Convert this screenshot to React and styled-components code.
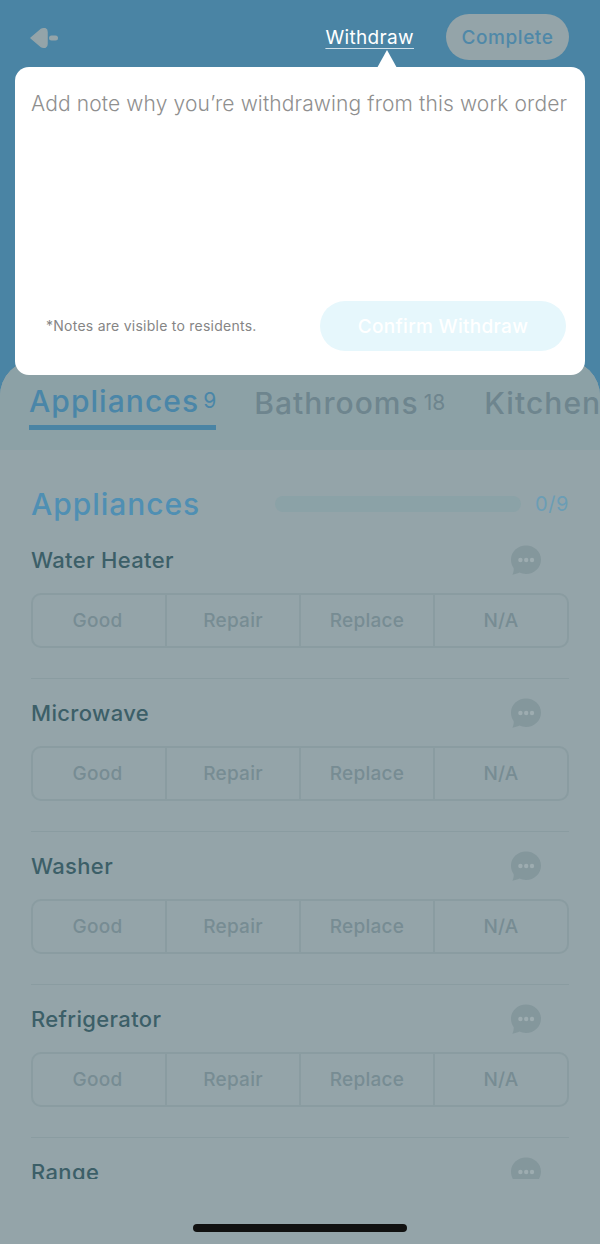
import React from "react";
import styled, { createGlobalStyle } from "styled-components";

const GlobalStyle = createGlobalStyle`
  html, body {
    margin: 0;
    padding: 0;
    background: #4a84a4;
  }
  * { box-sizing: border-box; }
`;

const FONT = `Inter, "Open Sans", "Liberation Sans", sans-serif`;

const Screen = styled.div`
  position: relative;
  width: 600px;
  height: 1244px;
  overflow: hidden;
  background: #4a84a4;
  font-family: ${FONT};
`;

const TopBar = styled.header`
  height: 360px;
  padding: 14px 31px 0 30px;
  display: flex;
  align-items: flex-start;
`;

const BackButton = styled.div`
  width: 28px;
  height: 20px;
  margin-top: 14px;
  display: flex;
`;

const WithdrawLink = styled.a`
  margin-left: auto;
  margin-top: 11px;
  color: #fff;
  font-size: 19px;
  line-height: 26px;
  font-weight: 400;
  letter-spacing: 0.35px;
  text-decoration: underline;
  text-underline-offset: 4px;
  text-decoration-thickness: 1px;
  text-decoration-color: #cfe0ea;
`;

const CompleteButton = styled.div`
  width: 123px;
  height: 46px;
  margin-left: 32px;
  border-radius: 23px;
  background: #94a4a9;
  color: #4f88a8;
  font-size: 19px;
  font-weight: 500;
  letter-spacing: 0.55px;
  display: flex;
  align-items: center;
  justify-content: center;
`;

const Sheet = styled.main`
  height: 884px;
  display: flex;
  flex-direction: column;
  background: #94a4a9;
  border-radius: 36px 36px 0 0;
  overflow: hidden;
`;

const Tabs = styled.nav`
  height: 90px;
  flex: none;
  padding: 20px 0 0 29px;
  display: flex;
  align-items: flex-start;
  gap: 38px;
  background: #8ca1a6;
  white-space: nowrap;
`;

const Tab = styled.div`
  display: flex;
  align-items: flex-start;
  gap: ${(p) => (p.$active ? "4px" : "5px")};
  height: ${(p) => (p.$active ? "50px" : "auto")};
  padding: ${(p) => (p.$active ? "0" : "2px 1px 0 0")};
  border-bottom: ${(p) => (p.$active ? "5px solid #4a84a4" : "none")};
  color: ${(p) => (p.$active ? "#4a86a8" : "#6e858e")};
`;

const TabLabel = styled.span`
  font-size: 30px;
  line-height: 42px;
  font-weight: 500;
  letter-spacing: 1.05px;
`;

const TabCount = styled.span`
  font-size: 21px;
  line-height: 42px;
`;

const Content = styled.div`
  height: 729px;
  overflow: hidden;
  padding: 0 31px;
`;

const SectionHeader = styled.div`
  height: 76px;
  padding-top: 34px;
  display: flex;
  align-items: flex-start;
`;

const SectionTitle = styled.h2`
  margin: 0;
  width: 244px;
  color: #4f8fb3;
  font-size: 30px;
  line-height: 40px;
  font-weight: 500;
  letter-spacing: 0.95px;
`;

const Progress = styled.div`
  width: 246px;
  height: 16px;
  margin-top: 12px;
  border-radius: 8px;
  background: #8ba2a7;
`;

const ProgressCount = styled.span`
  margin-left: auto;
  margin-top: -1px;
  color: #6b9db5;
  font-size: 20px;
  line-height: 42px;
  letter-spacing: 0.6px;
`;

const Item = styled.section`
  height: 153px;
  padding-top: 19px;
  border-bottom: 1px solid #8a9ca1;
`;

const ItemHead = styled.div`
  height: 30px;
  padding-right: 28px;
  display: flex;
  align-items: center;
  justify-content: space-between;
`;

const ItemName = styled.h3`
  margin: 0;
  color: #3c5f68;
  font-size: 22px;
  line-height: 30px;
  font-weight: 500;
  letter-spacing: 0.35px;
`;

const Choices = styled.div`
  margin-top: 18px;
  height: 55px;
  display: grid;
  grid-template-columns: 132px 134px 134px 1fr;
  border: 2px solid #8a9ca1;
  border-radius: 10px;
`;

const Choice = styled.div`
  display: flex;
  align-items: center;
  justify-content: center;
  padding-right: ${(p) => (p.$first ? "3px" : "0")};
  color: #778c93;
  font-size: 19px;
  font-weight: 500;
  letter-spacing: 0.25px;
  border-left: ${(p) => (p.$first ? "none" : "2px solid #8a9ca1")};
`;

const Popover = styled.div`
  position: absolute;
  left: 15px;
  top: 67px;
  width: 570px;
  height: 308px;
  padding: 23px 16px 24px 16px;
  display: flex;
  flex-direction: column;
  background: #fff;
  border-radius: 14px;

  &::before {
    content: "";
    position: absolute;
    left: 362px;
    top: -17px;
    border-left: 10px solid transparent;
    border-right: 10px solid transparent;
    border-bottom: 18px solid #fff;
  }
`;

const NotePlaceholder = styled.div`
  color: #8f8f8f;
  font-size: 21px;
  line-height: 28px;
  font-weight: 300;
  letter-spacing: 0.12px;
  white-space: nowrap;
`;

const PopoverFooter = styled.div`
  margin-top: auto;
  padding-left: 15px;
  display: flex;
  align-items: center;
  justify-content: space-between;
  padding-right: 3px;
`;

const NoteHint = styled.span`
  margin-bottom: 1px;
  color: #858585;
  font-size: 14px;
  letter-spacing: 0.25px;
`;

const ConfirmButton = styled.div`
  width: 246px;
  height: 50px;
  border-radius: 25px;
  background: #e6f7fc;
  color: #fff;
  font-size: 19px;
  font-weight: 500;
  letter-spacing: 0.3px;
  display: flex;
  align-items: center;
  justify-content: center;
`;

const HomeIndicator = styled.div`
  position: absolute;
  left: 193px;
  bottom: 12px;
  width: 214px;
  height: 8px;
  border-radius: 4px;
  background: #111;
`;

const BackIcon = () => (
  <svg width="28" height="20" viewBox="0 0 28 20" fill="#94a4a9">
    <path d="M1 10 L11 1.5 Q17 -1 17 4 V16 Q17 21 11 18.5 Z" stroke="#94a4a9" strokeWidth="1.5" strokeLinejoin="round" />
    <rect x="19" y="7.5" width="9" height="5" rx="2.5" />
  </svg>
);

const CommentIcon = () => (
  <svg width="30" height="30" viewBox="0 0 30 30">
    <path
      d="M15 0.5 C23.3 0.5 30 6.8 30 14.5 C30 22.7 23.3 29 15 29 C12.6 29 10.4 28.5 8.4 27.6 C6.4 28.6 3.8 29.5 1.4 29.8 C2.4 27.8 2.9 25.6 2.7 23.3 C1 20.8 0 17.8 0 14.5 C0 6.8 6.7 0.5 15 0.5 Z"
      fill="#84979c"
    />
    <circle cx="9.4" cy="15" r="2.2" fill="#9dacb0" />
    <circle cx="15.2" cy="15" r="2.2" fill="#9dacb0" />
    <circle cx="21" cy="15" r="2.2" fill="#9dacb0" />
  </svg>
);

const CHOICES = ["Good", "Repair", "Replace", "N/A"];
const ITEMS = ["Water Heater", "Microwave", "Washer", "Refrigerator", "Range"];

export default function App() {
  return (
    <Screen>
      <GlobalStyle />
      <TopBar>
        <BackButton>
          <BackIcon />
        </BackButton>
        <WithdrawLink>Withdraw</WithdrawLink>
        <CompleteButton>Complete</CompleteButton>
      </TopBar>

      <Sheet>
        <Tabs>
          <Tab $active>
            <TabLabel>Appliances</TabLabel>
            <TabCount>9</TabCount>
          </Tab>
          <Tab>
            <TabLabel>Bathrooms</TabLabel>
            <TabCount>18</TabCount>
          </Tab>
          <Tab>
            <TabLabel>Kitchen</TabLabel>
          </Tab>
        </Tabs>

        <Content>
          <SectionHeader>
            <SectionTitle>Appliances</SectionTitle>
            <Progress />
            <ProgressCount>0/9</ProgressCount>
          </SectionHeader>
          {ITEMS.map((name, i) => (
            <Item key={name}>
              <ItemHead>
                <ItemName>{name}</ItemName>
                <CommentIcon />
              </ItemHead>
              {/* the last row runs under the bottom edge of the list */}
              {i < ITEMS.length - 1 && (
                <Choices>
                  {CHOICES.map((c, j) => (
                    <Choice key={c} $first={j === 0}>{c}</Choice>
                  ))}
                </Choices>
              )}
            </Item>
          ))}
        </Content>
      </Sheet>

      <Popover>
        <NotePlaceholder>Add note why you’re withdrawing from this work order</NotePlaceholder>
        <PopoverFooter>
          <NoteHint>*Notes are visible to residents.</NoteHint>
          <ConfirmButton>Confirm Withdraw</ConfirmButton>
        </PopoverFooter>
      </Popover>

      <HomeIndicator />
    </Screen>
  );
}
